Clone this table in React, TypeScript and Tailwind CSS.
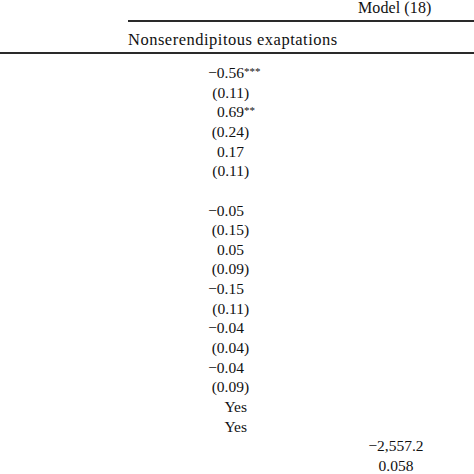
const rows: ([string, string] | null)[] = [
  ["\u22120.56", "***"],
  ["(0.11", ")"],
  ["0.69", "**"],
  ["(0.24", ")"],
  ["0.17", ""],
  ["(0.11", ")"],
  null,
  ["\u22120.05", ""],
  ["(0.15", ")"],
  ["0.05", ""],
  ["(0.09", ")"],
  ["\u22120.15", ""],
  ["(0.11", ")"],
  ["\u22120.04", ""],
  ["(0.04", ")"],
  ["\u22120.04", ""],
  ["(0.09", ")"],
];

export default function App() {
  return (
    <div
      className="w-[474px] h-[474px] overflow-hidden bg-white text-[#111]"
      style={{ fontFamily: '"Liberation Serif", "Times New Roman", serif' }}
    >
      <div className="h-[20px] flex items-start pl-[358px] text-[16px] tracking-[0.1px] leading-none pt-[0px]">
        Model (18)
      </div>
      <div className="ml-[128px] h-[2px] bg-[#2a2a2a]" />
      <div className="h-[30px] flex items-center pl-[128px] pt-[7px] text-[16.5px] tracking-[0.5px] leading-none">
        Nonserendipitous exaptations
      </div>
      <div className="h-[2px] bg-[#2a2a2a]" />
      <div className="pt-[9px] text-[15.5px] leading-none">
        {rows.map((r, i) =>
          r ? (
            <div key={i} className="h-[19.65px] flex items-center">
              <span className="w-[244px] text-right">{r[0]}</span>
              <span className={r[1].startsWith("*") ? "self-start text-[11px] mt-[3px]" : ""}>{r[1]}</span>
            </div>
          ) : (
            <div key={i} className="h-[19.65px]" />
          )
        )}
        <div className="h-[19.65px] flex items-center">
          <span className="w-[247px] text-right">Yes</span>
        </div>
        <div className="h-[19.65px] flex items-center">
          <span className="w-[247px] text-right">Yes</span>
        </div>
        <div className="h-[19.65px] flex items-center">
          <span className="ml-[346px] w-[100px] text-center">{"\u22122,557.2"}</span>
        </div>
        <div className="h-[19.65px] flex items-center">
          <span className="ml-[346px] w-[100px] text-center">0.058</span>
        </div>
      </div>
    </div>
  );
}
